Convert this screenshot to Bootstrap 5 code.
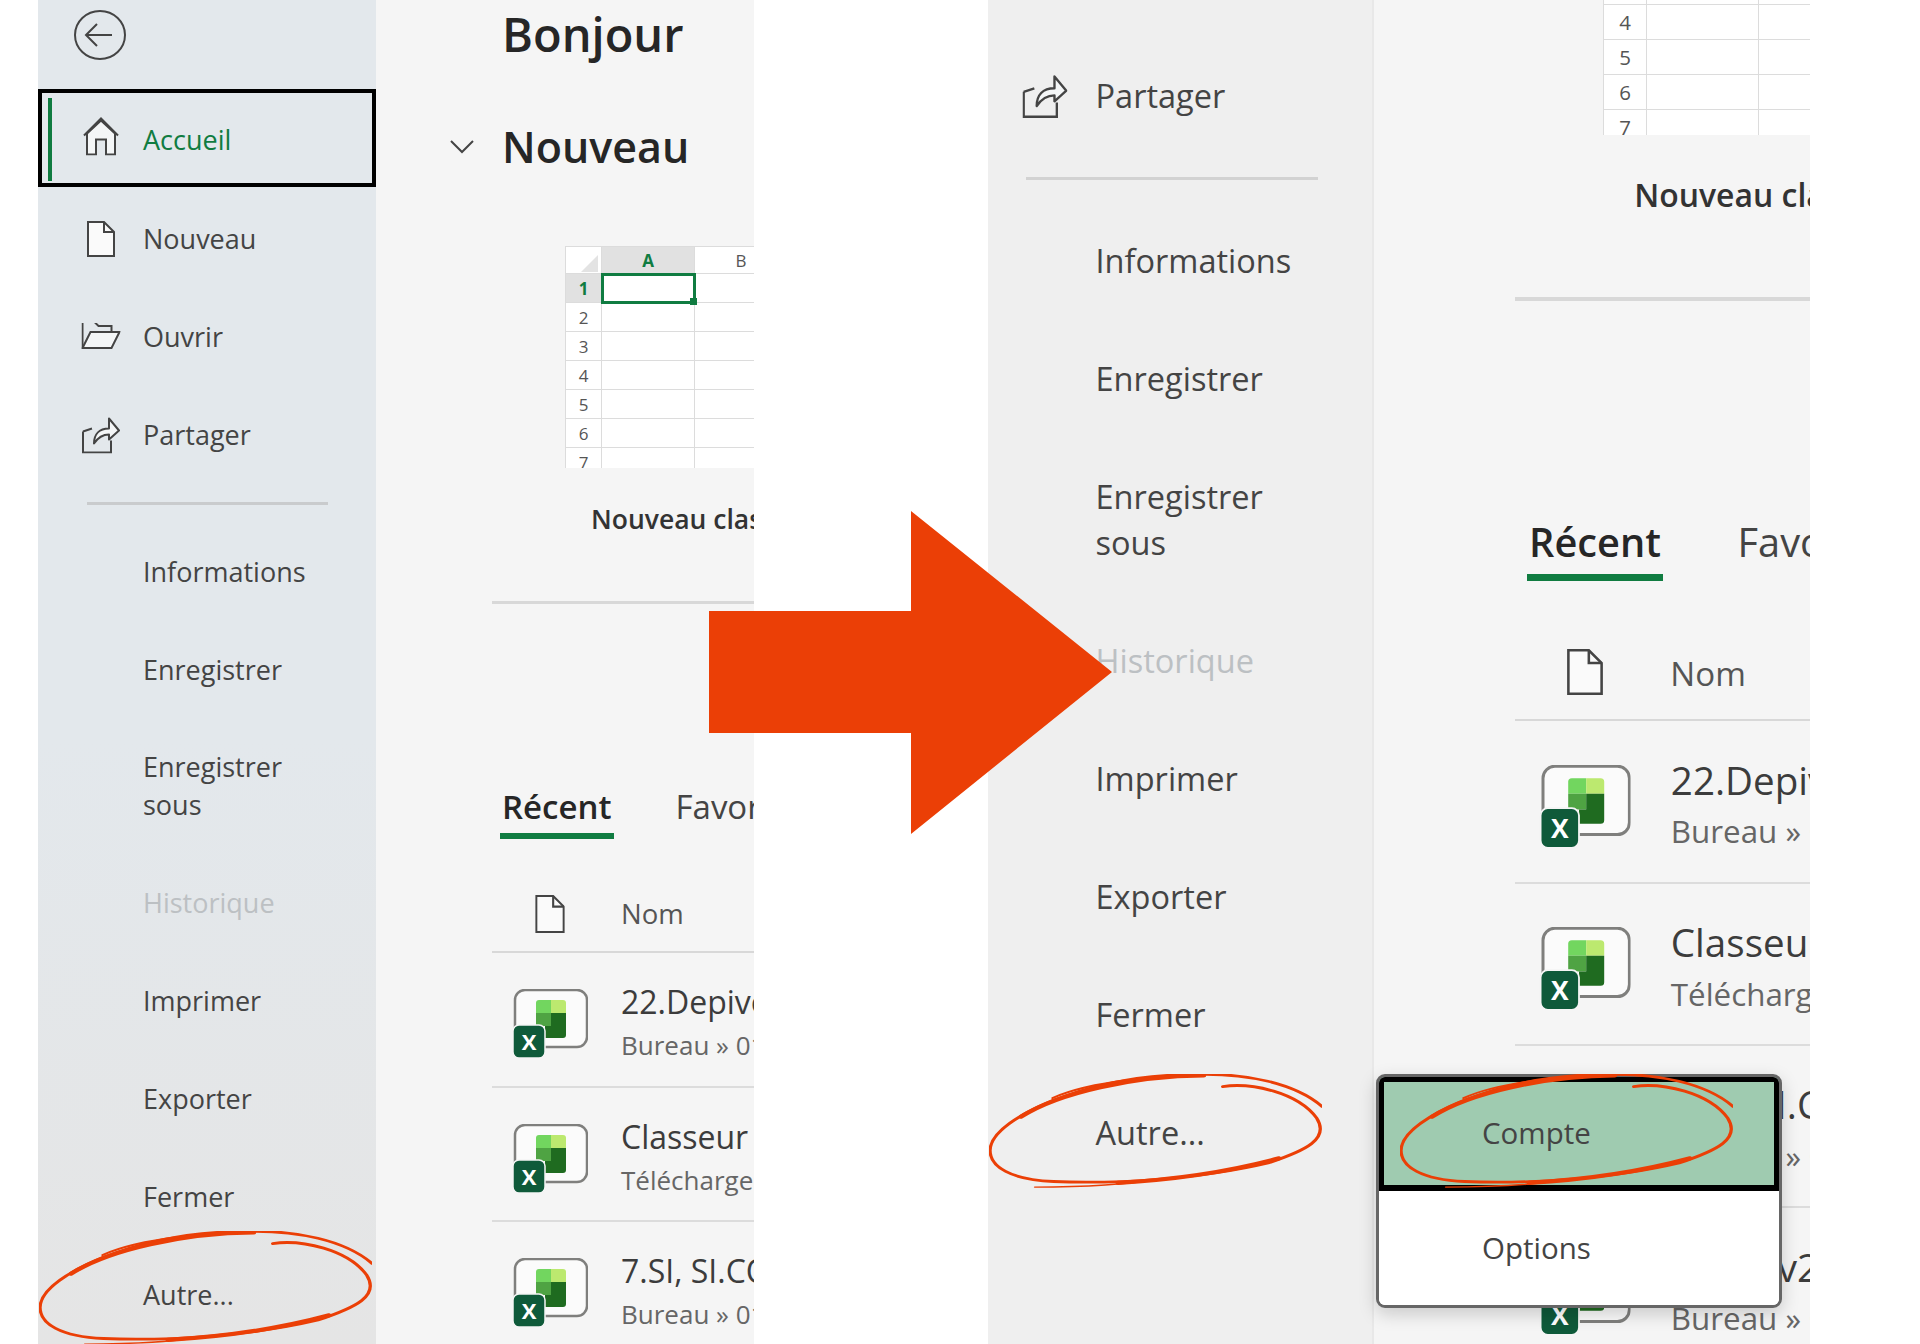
<!DOCTYPE html>
<html lang="fr">
<head>
  <meta charset="UTF-8" />
  <title>Excel - Compte</title>
  <link href="https://cdn.jsdelivr.net/npm/bootstrap@5.3.0/dist/css/bootstrap.min.css" rel="stylesheet">
  <style>
    html, body { height: 1344px; overflow: hidden; }
    body { width: 1920px; background: #fff; font-family: "Open Sans", "Liberation Sans", sans-serif; color: #333; position: relative; }
    .pane { height: 1344px; overflow: hidden; position: relative; flex: none; }
    .pane-a { --u: 1px; --cut: 0px; --ml: 116px; width: 716px; margin-left: 38px; }
    .pane-b { --u: 1.205px; --cut: 19px; --ml: 141px; width: 822px; margin-left: 234px; }

    /* menu de gauche */
    .side { flex: none; height: 100%; width: 338px; background: linear-gradient(180deg, #e3e8ec 0%, #e3e8ec 55%, #e5e5e5 100%); }
    .pane-b .side { width: 386px; background: #efefef; border-right: 2px solid #e8e8e8; padding-top: 37px; }
    .side-back { height: calc(var(--u) * 89); padding: 10px 0 0 36px; }
    .side-item { height: calc(var(--u) * 98); padding: 0 0 0 calc(var(--u) * 105 - var(--cut)); display: flex; align-items: center; position: relative; color: #444; font-size: calc(var(--u) * 27); line-height: calc(var(--u) * 38); }
    .side-item:hover { color: #444; }
    .side-item svg { position: absolute; left: calc(var(--u) * 63 - var(--cut)); top: 50%; transform: translate(-50%, -50%); overflow: visible; }
    .item-tall { height: calc(var(--u) * 136); }
    .item-muted, .item-muted:hover { color: #bcc0c3; }
    .item-home { color: #107c41; border: 4px solid #000; padding-top: 4px; margin-bottom: 3px; padding-left: 101px; }
    .item-home:hover { color: #107c41; }
    .item-home svg { left: 59px; top: 48%; }
    .item-home::before { content: ""; position: absolute; left: 6px; top: 5px; bottom: 2px; width: 4px; background: #107c41; }
    .side-rule { height: 3px; background: #c9cbcd; margin: calc(var(--u) * 18) 0; margin-left: calc(var(--u) * 49); width: 241px; }
    .pane-b .side-rule { background: #d2d2d2; margin-left: 38px; width: 292px; }

    /* contenu */
    .content { flex: 1 1 auto; min-width: 0; background: #f5f5f5; padding-left: var(--ml); }
    .hello { font-weight: 600; color: #262626; line-height: 60px; white-space: nowrap; }
    .hello-a { font-size: 47px; margin: 4px 0 0 10px; }
    .hello-b { font-size: 43px; margin: 53px 0 0 -42px; gap: 28px; }
    .sheet-wrap { height: calc(var(--u) * 222); margin: 69px 0 0 calc(var(--u) * 73); overflow: hidden; }
    .pane-b .sheet-wrap { margin-top: -133px; }
    .sheet { border-collapse: collapse; background: #fff; table-layout: fixed; width: calc(var(--u) * 222); font-size: calc(var(--u) * 17); color: #555; }
    .sheet th, .sheet td { border: 1px solid #dcdcdc; height: calc(var(--u) * 29); padding: 0; text-align: center; font-weight: 500; line-height: 1; }
    .sheet thead th { height: calc(var(--u) * 27); font-weight: 500; }
    .sheet .col-head { width: calc(var(--u) * 36); }
    .sheet .col-a { width: calc(var(--u) * 93); }
    .sheet .cell-on { background: #e1e1e1; color: #107c41; font-weight: 700; }
    .sheet .cell-pick { position: relative; outline: 3px solid #107c41; outline-offset: -2px; }
    .sheet .cell-pick::after { content: ""; position: absolute; right: -3px; bottom: -3px; width: 7px; height: 7px; background: #107c41; }
    .corner { display: block; width: 0; height: 0; margin: 6px 3px 0 auto; border-style: solid; border-width: 0 0 calc(var(--u) * 17) calc(var(--u) * 17); border-color: transparent transparent #e3e3e3 transparent; }
    .sheet-name { font-size: calc(var(--u) * 26.5); font-weight: 600; color: #333; line-height: calc(var(--u) * 34); margin: calc(var(--u) * 34) 0 0 calc(var(--u) * 99); white-space: nowrap; }
    .soft-rule { height: calc(var(--u) * 3); background: #d8d8d8; margin-top: calc(var(--u) * 65); width: 900px; }
    .pane-b .soft-rule { margin-top: 81px; }
    .tabs { margin-top: calc(var(--u) * 180); margin-left: calc(var(--u) * 10); gap: calc(var(--u) * 62); white-space: nowrap; flex-wrap: nowrap; }
    .pane-b .tabs { margin-top: 214px; margin-left: 14px; }
    .tab-link { font-size: calc(var(--u) * 33); line-height: calc(var(--u) * 46); color: #444; height: calc(var(--u) * 55); }
    .tab-on { font-weight: 600; color: #262626; border-bottom: calc(var(--u) * 6) solid #107c41; padding: 0 2px; margin-left: -2px; }
    .files { width: 900px; }
    .files-head { height: calc(var(--u) * 114); padding: calc(var(--u) * 56) 0 0 calc(var(--u) * 43); border-bottom: 2px solid #d8d8d8; gap: calc(var(--u) * 56); font-size: calc(var(--u) * 27.5); color: #555; line-height: calc(var(--u) * 38); }
    .pane-b .files-head { height: 140px; line-height: 50px; }
    .file-row { height: calc(var(--u) * 134.7); border-bottom: 2px solid #dcdcdc; padding-left: calc(var(--u) * 20); gap: calc(var(--u) * 33); white-space: nowrap; }
    .file-row svg { flex: none; margin-top: calc(var(--u) * 36); }
    .file-name { font-size: calc(var(--u) * 32); line-height: calc(var(--u) * 46); color: #3c3c3c; margin-top: calc(var(--u) * 26); }
    .file-path { font-size: calc(var(--u) * 26); line-height: calc(var(--u) * 36); color: #666; margin-top: calc(var(--u) * 2); }

    /* menu Autre */
    .more-menu { position: absolute; left: 388px; top: 1074px; width: 406px; height: 234px; border: 3px solid #666; border-radius: 9px; box-shadow: 0 6px 18px rgba(0,0,0,.18); background: #fff; overflow: hidden; }
    .more-item { height: 114px; display: flex; align-items: center; padding: 0 0 0 103px; font-size: 29.5px; color: #444; background: #fff; }
    .more-on { background: #9fcbb0; border: 5px solid #000; border-bottom-width: 6px; padding-left: 98px; color: #444; }

    .overlay { position: absolute; left: 0; top: 0; pointer-events: none; }
  </style>
</head>
<body class="d-flex">
  <!-- Symboles -->
  <svg width="0" height="0" class="position-absolute">
    <symbol id="i-home" viewBox="0 0 38 39"><path d="M2 19 19 2l17 17" fill="none" stroke="#444" stroke-width="2"/><path d="M5 38V17L19 4l14 13v21H24V23H14v15z" fill="#f4f6f7" stroke="#444" stroke-width="2"/></symbol>
    <symbol id="i-doc" viewBox="0 0 28 36"><path d="M1 1h16l10 10v24H1z" fill="#fafafa" stroke="#444" stroke-width="2"/><path d="M17 1v10h10" fill="none" stroke="#444" stroke-width="2"/></symbol>
    <symbol id="i-open" viewBox="0 2 39 28"><path d="M1 27V1h12l4 4h13v6" fill="none" stroke="#444" stroke-width="2"/><path d="M1 27h29l8-16H9z" fill="#f4f6f7" stroke="#444" stroke-width="2"/></symbol>
    <symbol id="i-share" viewBox="0 0 38 37"><path d="M1 15v21h28V24M1 15l9-3" fill="none" stroke="#444" stroke-width="2"/><path d="M12 27c0-9 5-15 15-15V2l10 12-10 9V18c-7 0-11 3-15 9z" fill="#f4f6f7" stroke="#444" stroke-width="2" stroke-linejoin="round"/></symbol>
    <symbol id="i-xl" viewBox="0 0 76 70">
      <rect x="3" y="1" width="72" height="57" rx="10" fill="#fbfbfb" stroke="#7f7f7d" stroke-width="2.5"/>
      <path d="M24 14a3 3 0 0 1 3-3h12v13H24z" fill="#72d65f"/>
      <path d="M39 11h12a3 3 0 0 1 3 3v10H39z" fill="#bce96f"/>
      <path d="M24 24h15v13H24z" fill="#4fa343"/>
      <path d="M33 37h6V24h15v22a3 3 0 0 1-3 3H33z" fill="#1f6b20"/>
      <rect x="1" y="36" width="32" height="33" rx="6" fill="#0f5a3a" stroke="#f5f5f5" stroke-width="1.5"/>
      <text x="17" y="61" text-anchor="middle" font-family="Open Sans, sans-serif" font-weight="700" font-size="22" fill="#fff">X</text>
    </symbol>
    <symbol id="i-loop" viewBox="0 0 620 246" preserveAspectRatio="none">
      <g fill="none" stroke="#eb3f06" stroke-linecap="round">
        <path stroke-width="6" d="M435 27C490 18 575 40 610 95 635 140 590 165 520 192 400 225 240 238 120 232 40 228 2 200 2 165 2 125 60 85 118 58 210 15 300 1 385 1 480-2 570 20 620 70"/>
        <path stroke-width="9" d="M60 92C130 40 270 4 400 3"/>
        <path stroke-width="4" d="M118 52C160 30 210 20 260 13"/>
        <path stroke-width="9" d="M240 235C350 228 450 210 540 182"/>
        <path stroke-width="3" d="M85 244C160 244 250 240 320 226"/>
      </g>
    </symbol>
  </svg>

  <!-- Avant -->
  <div class="pane pane-a d-flex">
    <nav class="side d-flex flex-column">
      <div class="side-back">
        <svg width="52" height="50" viewBox="0 0 52 50"><ellipse cx="26" cy="25" rx="25" ry="24" fill="none" stroke="#444" stroke-width="2"/><path d="M38 25H13M23 14 12 25l11 11" fill="none" stroke="#444" stroke-width="2"/></svg>
      </div>
      <a class="side-item item-home text-decoration-none" href="#"><svg width="38" height="39"><use href="#i-home"/></svg>Accueil</a>
      <a class="side-item text-decoration-none" href="#"><svg width="28" height="36"><use href="#i-doc"/></svg>Nouveau</a>
      <a class="side-item text-decoration-none" href="#"><svg width="39" height="28"><use href="#i-open"/></svg>Ouvrir</a>
      <a class="side-item text-decoration-none" href="#"><svg width="38" height="37"><use href="#i-share"/></svg>Partager</a>
      <div class="side-rule"></div>
      <a class="side-item text-decoration-none" href="#">Informations</a>
      <a class="side-item text-decoration-none" href="#">Enregistrer</a>
      <a class="side-item item-tall text-decoration-none" href="#">Enregistrer<br>sous</a>
      <a class="side-item item-muted text-decoration-none" href="#">Historique</a>
      <a class="side-item text-decoration-none" href="#">Imprimer</a>
      <a class="side-item text-decoration-none" href="#">Exporter</a>
      <a class="side-item text-decoration-none" href="#">Fermer</a>
      <a class="side-item text-decoration-none" href="#">Autre...</a>
    </nav>
    <main class="content">
      <div class="hello hello-a">Bonjour</div>
      <div class="hello hello-b d-flex align-items-center">
        <svg width="24" height="14" viewBox="0 0 24 14"><path d="M1 1l11 11L23 1" fill="none" stroke="#444" stroke-width="2"/></svg>
        Nouveau
      </div>
      <div class="sheet-wrap">
        <table class="sheet">
          <thead><tr><th class="col-head"><span class="corner"></span></th><th class="col-a cell-on">A</th><th class="col-a">B</th></tr></thead>
          <tbody>
            <tr><th class="cell-on">1</th><td class="cell-pick"></td><td></td></tr>
            <tr><th>2</th><td></td><td></td></tr>
            <tr><th>3</th><td></td><td></td></tr>
            <tr><th>4</th><td></td><td></td></tr>
            <tr><th>5</th><td></td><td></td></tr>
            <tr><th>6</th><td></td><td></td></tr>
            <tr><th>7</th><td></td><td></td></tr>
          </tbody>
        </table>
      </div>
      <div class="sheet-name">Nouveau classeur</div>
      <div class="soft-rule"></div>
      <div class="tabs d-flex">
        <div class="tab-link tab-on">Récent</div>
        <div class="tab-link">Favoris</div>
      </div>
      <div class="files">
        <div class="files-head d-flex"><svg width="30" height="38" viewBox="0 0 28 36"><use href="#i-doc"/></svg>Nom</div>
        <div class="file-row d-flex"><svg width="76" height="70"><use href="#i-xl"/></svg><div><div class="file-name">22.Depivotage</div><div class="file-path">Bureau » 01.Excel</div></div></div>
        <div class="file-row d-flex"><svg width="76" height="70"><use href="#i-xl"/></svg><div><div class="file-name">Classeur 1</div><div class="file-path">Téléchargements</div></div></div>
        <div class="file-row d-flex"><svg width="76" height="70"><use href="#i-xl"/></svg><div><div class="file-name">7.SI, SI.CONDITIONS</div><div class="file-path">Bureau » 01.Excel</div></div></div>
      </div>
    </main>
  </div>

  <!-- Après -->
  <div class="pane pane-b d-flex">
    <nav class="side d-flex flex-column">
      <a class="side-item text-decoration-none" href="#"><svg width="45" height="44" viewBox="0 0 38 37"><use href="#i-share"/></svg>Partager</a>
      <div class="side-rule"></div>
      <a class="side-item text-decoration-none" href="#">Informations</a>
      <a class="side-item text-decoration-none" href="#">Enregistrer</a>
      <a class="side-item item-tall text-decoration-none" href="#">Enregistrer<br>sous</a>
      <a class="side-item item-muted text-decoration-none" href="#">Historique</a>
      <a class="side-item text-decoration-none" href="#">Imprimer</a>
      <a class="side-item text-decoration-none" href="#">Exporter</a>
      <a class="side-item text-decoration-none" href="#">Fermer</a>
      <a class="side-item text-decoration-none" href="#">Autre...</a>
    </nav>
    <main class="content">
      <div class="sheet-wrap">
        <table class="sheet">
          <thead><tr><th class="col-head"><span class="corner"></span></th><th class="col-a cell-on">A</th><th class="col-a">B</th></tr></thead>
          <tbody>
            <tr><th class="cell-on">1</th><td class="cell-pick"></td><td></td></tr>
            <tr><th>2</th><td></td><td></td></tr>
            <tr><th>3</th><td></td><td></td></tr>
            <tr><th>4</th><td></td><td></td></tr>
            <tr><th>5</th><td></td><td></td></tr>
            <tr><th>6</th><td></td><td></td></tr>
            <tr><th>7</th><td></td><td></td></tr>
          </tbody>
        </table>
      </div>
      <div class="sheet-name">Nouveau classeur</div>
      <div class="soft-rule"></div>
      <div class="tabs d-flex">
        <div class="tab-link tab-on">Récent</div>
        <div class="tab-link">Favoris</div>
      </div>
      <div class="files">
        <div class="files-head d-flex"><svg width="36" height="46" viewBox="0 0 28 36"><use href="#i-doc"/></svg>Nom</div>
        <div class="file-row d-flex"><svg width="92" height="84" viewBox="0 0 76 70"><use href="#i-xl"/></svg><div><div class="file-name">22.Depivotage</div><div class="file-path">Bureau » 01.Excel</div></div></div>
        <div class="file-row d-flex"><svg width="92" height="84" viewBox="0 0 76 70"><use href="#i-xl"/></svg><div><div class="file-name">Classeur 1</div><div class="file-path">Téléchargements</div></div></div>
        <div class="file-row d-flex"><svg width="92" height="84" viewBox="0 0 76 70"><use href="#i-xl"/></svg><div><div class="file-name">7.SI, SI.CONDITIONS</div><div class="file-path">Bureau » 01.Excel</div></div></div>
        <div class="file-row d-flex"><svg width="92" height="84" viewBox="0 0 76 70"><use href="#i-xl"/></svg><div><div class="file-name">Devis v2</div><div class="file-path">Bureau » 01.Excel</div></div></div>
      </div>
    </main>
    <ul class="more-menu list-group list-unstyled m-0">
      <li class="more-item more-on">Compte</li>
      <li class="more-item">Options</li>
    </ul>
  </div>

  <!-- Flèche et annotations -->
  <svg class="overlay" width="1920" height="1344" viewBox="0 0 1920 1344">
    <path d="M709 611H911V511L1112 672 911 834V733H709z" fill="#eb3f06"/>
    <use href="#i-loop" x="39" y="1231" width="333" height="114"/>
    <use href="#i-loop" x="989" y="1074" width="333" height="114"/>
    <use href="#i-loop" x="1400" y="1074" width="333" height="114"/>
  </svg>
  <script src="https://cdn.jsdelivr.net/npm/bootstrap@5.3.0/dist/js/bootstrap.bundle.min.js"></script>
</body>
</html>
